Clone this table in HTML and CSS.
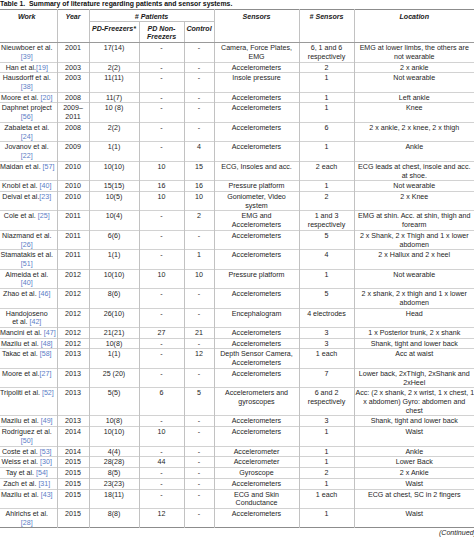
FILE: index.html
```html
<!DOCTYPE html>
<html>
<head>
<meta charset="utf-8">
<link rel="stylesheet" href="styles.css">
</head>
<body>
<div class="title">Table 1.&nbsp; Summary of literature regarding patients and sensor systems.</div>
<table class="lit">
<colgroup>
<col class="c-work"><col class="c-year"><col class="c-pdf"><col class="c-pdn"><col class="c-ctl"><col class="c-sen"><col class="c-num"><col class="c-loc">
</colgroup>
<thead>
<tr class="h1">
<th rowspan="2" class="first">Work</th>
<th rowspan="2">Year</th>
<th colspan="3" class="span">&#35; Patients</th>
<th rowspan="2">Sensors</th>
<th rowspan="2">&#35; Sensors</th>
<th rowspan="2">Location</th>
</tr>
<tr class="h2">
<th>PD-Freezers*</th>
<th>PD Non-<br>Freezers</th>
<th>Control</th>
</tr>
</thead>
<tbody>
<tr><td class="first">Nieuwboer et al.<br><span class="ref">[39]</span></td><td>2001</td><td>17(14)</td><td>-</td><td>-</td><td>Camera, Force Plates,<br>EMG</td><td>6, 1 and 6<br>respectively</td><td>EMG at lower limbs, the others are<br>not wearable</td></tr>
<tr><td class="first">Han et al.<span class="ref">[19]</span></td><td>2003</td><td>2(2)</td><td>-</td><td>-</td><td>Accelerometers</td><td>2</td><td>2 x ankle</td></tr>
<tr><td class="first">Hausdorff et al.<br><span class="ref">[38]</span></td><td>2003</td><td>11(11)</td><td>-</td><td>-</td><td>Insole pressure</td><td>1</td><td>Not wearable</td></tr>
<tr><td class="first">Moore et al. <span class="ref">[20]</span></td><td>2008</td><td>11(7)</td><td>-</td><td>-</td><td>Accelerometers</td><td>1</td><td>Left ankle</td></tr>
<tr><td class="first">Daphnet project<br><span class="ref">[56]</span></td><td>2009–<br>2011</td><td>10 (8)</td><td>-</td><td>-</td><td>Accelerometers</td><td>1</td><td>Knee</td></tr>
<tr><td class="first">Zabaleta et al.<br><span class="ref">[24]</span></td><td>2008</td><td>2(2)</td><td>-</td><td>-</td><td>Accelerometers</td><td>6</td><td>2 x ankle, 2 x knee, 2 x thigh</td></tr>
<tr><td class="first">Jovanov et al.<br><span class="ref">[22]</span></td><td>2009</td><td>1(1)</td><td>-</td><td>4</td><td>Accelerometers</td><td>1</td><td>Ankle</td></tr>
<tr><td class="first">Maidan et al. <span class="ref">[57]</span></td><td>2010</td><td>10(10)</td><td>10</td><td>15</td><td>ECG, Insoles and acc.</td><td>2 each</td><td>ECG leads at chest, insole and acc.<br>at shoe.</td></tr>
<tr><td class="first">Knobl et al. <span class="ref">[40]</span></td><td>2010</td><td>15(15)</td><td>16</td><td>16</td><td>Pressure platform</td><td>1</td><td>Not wearable</td></tr>
<tr><td class="first">Delval et al.<span class="ref">[23]</span></td><td>2010</td><td>10(5)</td><td>10</td><td>10</td><td>Goniometer, Video<br>system</td><td>2</td><td>2 x Knee</td></tr>
<tr><td class="first">Cole et al. <span class="ref">[25]</span></td><td>2011</td><td>10(4)</td><td>-</td><td>2</td><td>EMG and<br>Accelerometers</td><td>1 and 3<br>respectively</td><td>EMG at shin. Acc. at shin, thigh and<br>forearm</td></tr>
<tr><td class="first">Niazmand et al.<br><span class="ref">[26]</span></td><td>2011</td><td>6(6)</td><td>-</td><td>-</td><td>Accelerometers</td><td>5</td><td>2 x Shank, 2 x Thigh and 1 x lower<br>abdomen</td></tr>
<tr><td class="first">Stamatakis et al.<br><span class="ref">[51]</span></td><td>2011</td><td>1(1)</td><td>-</td><td>1</td><td>Accelerometers</td><td>4</td><td>2 x Hallux and 2 x heel</td></tr>
<tr><td class="first">Almeida et al.<br><span class="ref">[40]</span></td><td>2012</td><td>10(10)</td><td>10</td><td>10</td><td>Pressure platform</td><td>1</td><td>Not wearable</td></tr>
<tr><td class="first">Zhao et al. <span class="ref">[46]</span></td><td>2012</td><td>8(6)</td><td>-</td><td>-</td><td>Accelerometers</td><td>5</td><td>2 x shank, 2 x thigh and 1 x lower<br>abdomen</td></tr>
<tr><td class="first">Handojoseno<br>et al. <span class="ref">[42]</span></td><td>2012</td><td>26(10)</td><td>-</td><td>-</td><td>Encephalogram</td><td>4 electrodes</td><td>Head</td></tr>
<tr><td class="first">Mancini et al. <span class="ref">[47]</span></td><td>2012</td><td>21(21)</td><td>27</td><td>21</td><td>Accelerometers</td><td>3</td><td>1 x Posterior trunk, 2 x shank</td></tr>
<tr><td class="first">Mazilu et al. <span class="ref">[48]</span></td><td>2012</td><td>10(8)</td><td>-</td><td>-</td><td>Accelerometers</td><td>3</td><td>Shank, tight and lower back</td></tr>
<tr><td class="first">Takac et al. <span class="ref">[58]</span></td><td>2013</td><td>1(1)</td><td>-</td><td>12</td><td>Depth Sensor Camera,<br>Accelerometers</td><td>1 each</td><td>Acc at waist</td></tr>
<tr><td class="first">Moore et al.<span class="ref">[27]</span></td><td>2013</td><td>25 (20)</td><td>-</td><td>-</td><td>Accelerometers</td><td>7</td><td>Lower back, 2xThigh, 2xShank and<br>2xHeel</td></tr>
<tr><td class="first">Tripoliti et al. <span class="ref">[52]</span></td><td>2013</td><td>5(5)</td><td>6</td><td>5</td><td>Accelerometers and<br>gyroscopes</td><td>6 and 2<br>respectively</td><td>Acc: (2 x shank, 2 x wrist, 1 x chest, 1<br>x abdomen) Gyro: abdomen and<br>chest</td></tr>
<tr><td class="first">Mazilu et al. <span class="ref">[49]</span></td><td>2013</td><td>10(8)</td><td>-</td><td>-</td><td>Accelerometers</td><td>3</td><td>Shank, tight and lower back</td></tr>
<tr><td class="first">Rodríguez et al.<br><span class="ref">[50]</span></td><td>2014</td><td>10(10)</td><td>10</td><td>-</td><td>Accelerometers</td><td>1</td><td>Waist</td></tr>
<tr><td class="first">Coste et al. <span class="ref">[53]</span></td><td>2014</td><td>4(4)</td><td>-</td><td>-</td><td>Accelerometer</td><td>1</td><td>Ankle</td></tr>
<tr><td class="first">Weiss et al. <span class="ref">[30]</span></td><td>2015</td><td>28(28)</td><td>44</td><td>-</td><td>Accelerometer</td><td>1</td><td>Lower Back</td></tr>
<tr><td class="first">Tay et al. <span class="ref">[54]</span></td><td>2015</td><td>8(5)</td><td>-</td><td>-</td><td>Gyroscope</td><td>2</td><td>2 x Ankle</td></tr>
<tr><td class="first">Zach et al. <span class="ref">[31]</span></td><td>2015</td><td>23(23)</td><td>-</td><td>-</td><td>Accelerometers</td><td>1</td><td>Waist</td></tr>
<tr><td class="first">Mazilu et al. <span class="ref">[43]</span></td><td>2015</td><td>18(11)</td><td>-</td><td>-</td><td>ECG and Skin<br>Conductance</td><td>1 each</td><td>ECG at chest, SC in 2 fingers</td></tr>
<tr><td class="first">Ahlrichs et al.<br><span class="ref">[28]</span></td><td>2015</td><td>8(8)</td><td>12</td><td>-</td><td>Accelerometers</td><td>1</td><td>Waist</td></tr>
</tbody>
</table>
<div class="cont">(Continued)</div>
</body>
</html>
```

FILE: styles.css
```css
html, body {
  margin: 0;
  padding: 0;
  background: #ffffff;
}
body {
  width: 474px;
  height: 537px;
  overflow: hidden;
  font-family: "Liberation Sans", Arial, sans-serif;
  color: #1e1e1e;
}
.title {
  font-weight: bold;
  font-size: 6.9px;
  line-height: 7px;
  height: 9px;
  white-space: nowrap;
  color: #111111;
}
.lit {
  width: 474px;
  table-layout: fixed;
  border-collapse: collapse;
  border-top: 1px solid #8c8c8c;
  border-bottom: 1px solid #8c8c8c;
  font-size: 7.1px;
  line-height: 8.72px;
}
.c-work { width: 57px; }
.c-year { width: 32px; }
.c-pdf { width: 50px; }
.c-pdn { width: 45px; }
.c-ctl { width: 30px; }
.c-sen { width: 85px; }
.c-num { width: 55px; }
.c-loc { width: 120px; }
.lit th, .lit td {
  text-align: center;
  vertical-align: top;
  white-space: nowrap;
  border-left: 1px solid #c2c2c2;
  padding: 1px 1px 0 1px;
}
.lit th.first, .lit td.first {
  border-left: none;
  padding-left: 0;
  padding-right: 3px;
}
.lit th {
  font-weight: bold;
  font-style: italic;
  padding-top: 2.5px;
  color: #1a1a1a;
}
.lit tr.h1 { height: 12px; }
.lit tr.h2 { height: 19.7px; }
.lit th.span { border-bottom: 1px solid #c2c2c2; }
.lit thead tr.h2 th { border-bottom: 1px solid #9a9a9a; }
.lit thead tr.h1 th[rowspan] { border-bottom: 1px solid #9a9a9a; }
.lit tbody tr { border-bottom: 1px solid #d2d2d2; }
.lit tbody tr:last-child { border-bottom: 1px solid #8c8c8c; }
.ref { color: #5a7dc6; }
.cont {
  font-style: italic;
  font-size: 7.1px;
  line-height: 8px;
  text-align: right;
  margin-top: 1px;
  margin-right: -2px;
  white-space: nowrap;
}
```
